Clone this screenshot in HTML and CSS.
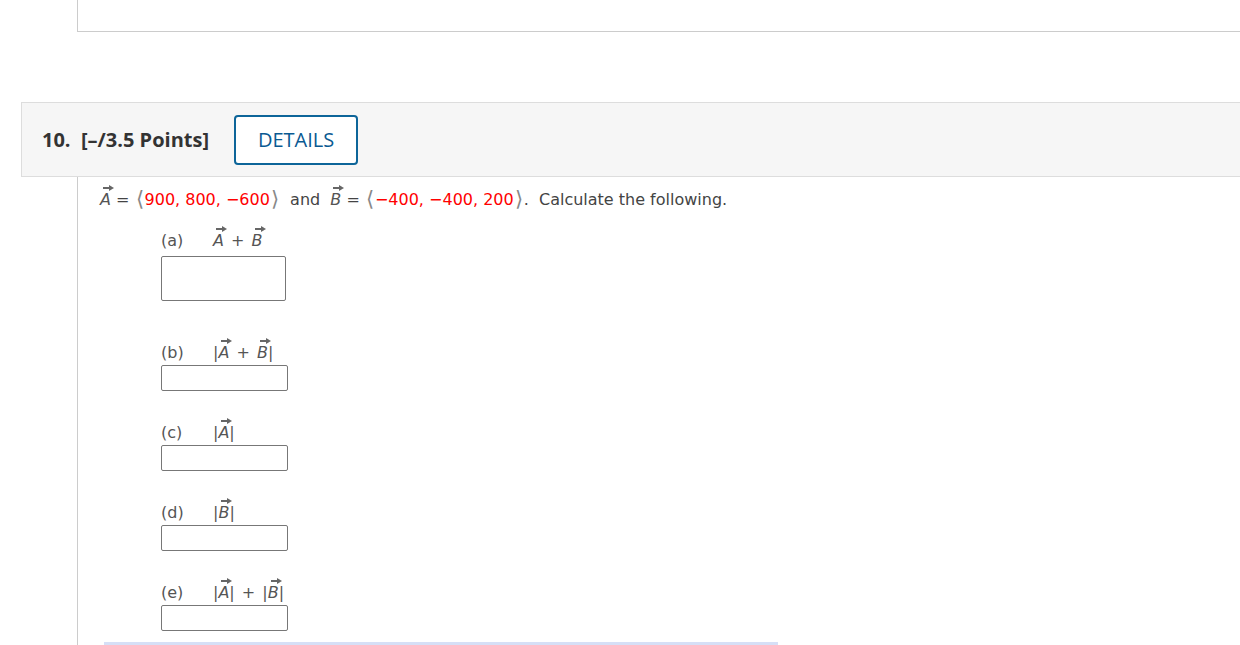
FILE: index.html
```html
<!DOCTYPE html>
<html lang="en">
<head>
  <meta charset="UTF-8" />
  <meta name="viewport" content="width=device-width, initial-scale=1.0" />
  <title>Question 10</title>
  <link rel="stylesheet" href="styles.css">
</head>
<body>
  <div class="prev-box"></div>

  <div class="question">
    <div class="q-header">
      <span class="q-title">10.&nbsp; [–/3.5 Points]</span>
      <button class="btn-details">DETAILS</button>
    </div>

    <div class="q-body">
      <p class="prompt">
        <span class="vec">A</span> = <span class="ang">⟨</span><span class="num">900, 800, −600</span><span class="ang">⟩</span>
        &nbsp;and&nbsp; <span class="vec">B</span> = <span class="ang">⟨</span><span class="num">−400, −400, 200</span><span class="ang">⟩</span>.&nbsp; Calculate the following.
      </p>

      <div class="part first">
        <div class="part-label"><span class="letter">(a)</span><span class="expr"><span class="vec">A</span> + <span class="vec">B</span></span></div>
        <input class="answer tall" type="text">
      </div>

      <div class="part">
        <div class="part-label"><span class="letter">(b)</span><span class="expr">|<span class="vec">A</span> + <span class="vec">B</span>|</span></div>
        <input class="answer" type="text">
      </div>

      <div class="part">
        <div class="part-label"><span class="letter">(c)</span><span class="expr">|<span class="vec">A</span>|</span></div>
        <input class="answer" type="text">
      </div>

      <div class="part">
        <div class="part-label"><span class="letter">(d)</span><span class="expr">|<span class="vec">B</span>|</span></div>
        <input class="answer" type="text">
      </div>

      <div class="part last">
        <div class="part-label"><span class="letter">(e)</span><span class="expr">|<span class="vec">A</span>| + |<span class="vec">B</span>|</span></div>
        <input class="answer" type="text">
      </div>

      <div class="bottom-bar"></div>
    </div>
  </div>
</body>
</html>
```

FILE: styles.css
```css
body {
  margin: 0;
  background: #fff;
  font-family: "DejaVu Sans", Verdana, sans-serif;
  color: #444;
  overflow: hidden;
}
.prev-box {
  margin-left: 77px;
  height: 31px;
  border-left: 1px solid #ccc;
  border-bottom: 1px solid #ccc;
}
.question {
  margin-top: 70px;
  margin-left: 21px;
}
.q-header {
  display: flex;
  align-items: center;
  height: 73px;
  padding-left: 20px;
  background: #f6f6f6;
  border: 1px solid #ddd;
  border-right: none;
}
.q-title {
  font-family: "Open Sans", sans-serif;
  font-weight: 700;
  font-size: 20px;
  color: #333;
  margin-right: 25px;
}
.btn-details {
  font-family: "Open Sans", sans-serif;
  font-size: 20px;
  color: #0a5a92;
  background: #fff;
  border: 2px solid #0d6599;
  border-radius: 4px;
  width: 124px;
  height: 50px;
  padding: 0;
}
.q-body {
  margin-left: 56px;
  border-left: 1px solid #ccc;
  padding-left: 22px;
  padding-top: 11px;
  height: 480px;
}
.prompt {
  margin: 0 0 19px;
  font-size: 16px;
  line-height: 24px;
  color: #444;
}
.num {
  color: #f00;
}
.ang {
  color: #888;
  font-size: 21px;
  font-weight: 300;
  line-height: 1;
  vertical-align: -1px;
  margin: 0 1px;
}
.vec {
  position: relative;
  font-style: italic;
  color: #555;
}
.vec::before {
  content: "";
  position: absolute;
  left: 3px;
  top: -3px;
  width: 9px;
  height: 1.5px;
  background: #666;
}
.vec::after {
  content: "";
  position: absolute;
  left: 9px;
  top: -5.5px;
  border-left: 5px solid #666;
  border-top: 3.25px solid transparent;
  border-bottom: 3.25px solid transparent;
}
.part {
  margin-left: 61px;
  margin-bottom: 32px;
}
.part.first {
  margin-bottom: 42px;
}
.part.last {
  margin-bottom: 11px;
}
.part-label {
  display: flex;
  font-size: 16px;
  line-height: 20px;
  color: #555;
  margin-bottom: 2px;
}
.part.first .part-label {
  margin-bottom: 5px;
}
.letter {
  width: 52px;
}
.expr {
  color: #555;
  word-spacing: 2px;
}
.answer {
  display: block;
  box-sizing: border-box;
  width: 127px;
  height: 26px;
  margin: 0;
  border: 1px solid #777;
  border-radius: 2px;
  background: #fff;
}
.answer.tall {
  width: 125px;
  height: 45px;
}
.bottom-bar {
  margin-left: 4px;
  width: 674px;
  height: 4px;
  background: #d6dff6;
}
```
